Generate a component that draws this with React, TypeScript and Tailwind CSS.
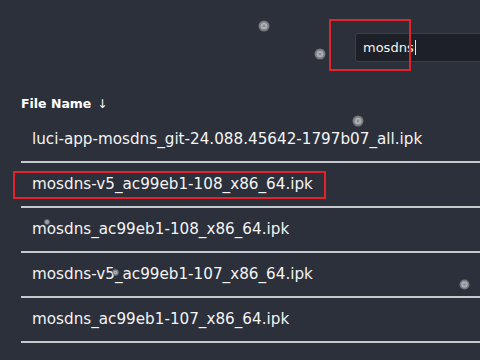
import React from 'react'

const files = [
  'luci-app-mosdns_git-24.088.45642-1797b07_all.ipk',
  'mosdns-v5_ac99eb1-108_x86_64.ipk',
  'mosdns_ac99eb1-108_x86_64.ipk',
  'mosdns-v5_ac99eb1-107_x86_64.ipk',
  'mosdns_ac99eb1-107_x86_64.ipk',
]

const flakes = [
  { x: 258, y: 20, s: 12 },
  { x: 314, y: 48, s: 12 },
  { x: 352, y: 115, s: 12 },
  { x: 459, y: 279, s: 11 },
  { x: 44, y: 219, s: 6 },
  { x: 112, y: 269, s: 7 },
]

function Flake({ x, y, s }: { x: number; y: number; s: number }) {
  return (
    <svg
      className="pointer-events-none absolute"
      style={{ left: x, top: y, width: s, height: s }}
      viewBox="0 0 12 12"
    >
      <circle cx="6" cy="6" r="5.5" fill="#7d8087" opacity="0.9" />
      <circle cx="6" cy="6" r="3.6" fill="#a9acb1" />
      <circle cx="6" cy="6" r="1.4" fill="#8a8d93" />
    </svg>
  )
}

export default function App() {
  return (
    <main className="relative h-[360px] w-[480px] overflow-hidden bg-[#2c303b] text-[#f4f4f4] [font-family:'DejaVu_Sans',Verdana,sans-serif]">
      {/* search */}
      <div className="flex h-[90px] items-start pl-[355px] pt-[33px]">
        <div className="flex h-[29px] w-[140px] shrink-0 items-center rounded-[3px] border border-[#3b3f49] bg-[#1d2027] pl-[7px] text-[13px]">
          mosdns
          <span className="ml-[1px] h-[15px] w-[1px] bg-[#e8e8e8]" />
        </div>
      </div>

      <div className="flex h-[28px] items-center gap-[6px] pl-[21px] text-[12.5px] font-bold text-white">
        File Name <span className="text-[12px] font-normal">↓</span>
      </div>

      <ul className="ml-[21px]">
        {files.map((f) => (
          <li key={f} className="flex flex-col">
            <div className="flex h-[43px] items-center pl-[11px] text-[15.2px] leading-none">{f}</div>
            <div className="h-[2px] bg-[#c6c9cd]" />
          </li>
        ))}
      </ul>

      {/* annotation boxes */}
      <div className="pointer-events-none absolute left-[329px] top-[19px] h-[52px] w-[82px] border-2 border-[#e3232b]" />
      <div className="pointer-events-none absolute left-[13px] top-[171px] h-[28px] w-[313px] border-2 border-[#e3232b]" />

      {flakes.map((f, i) => (
        <Flake key={i} {...f} />
      ))}
    </main>
  )
}
